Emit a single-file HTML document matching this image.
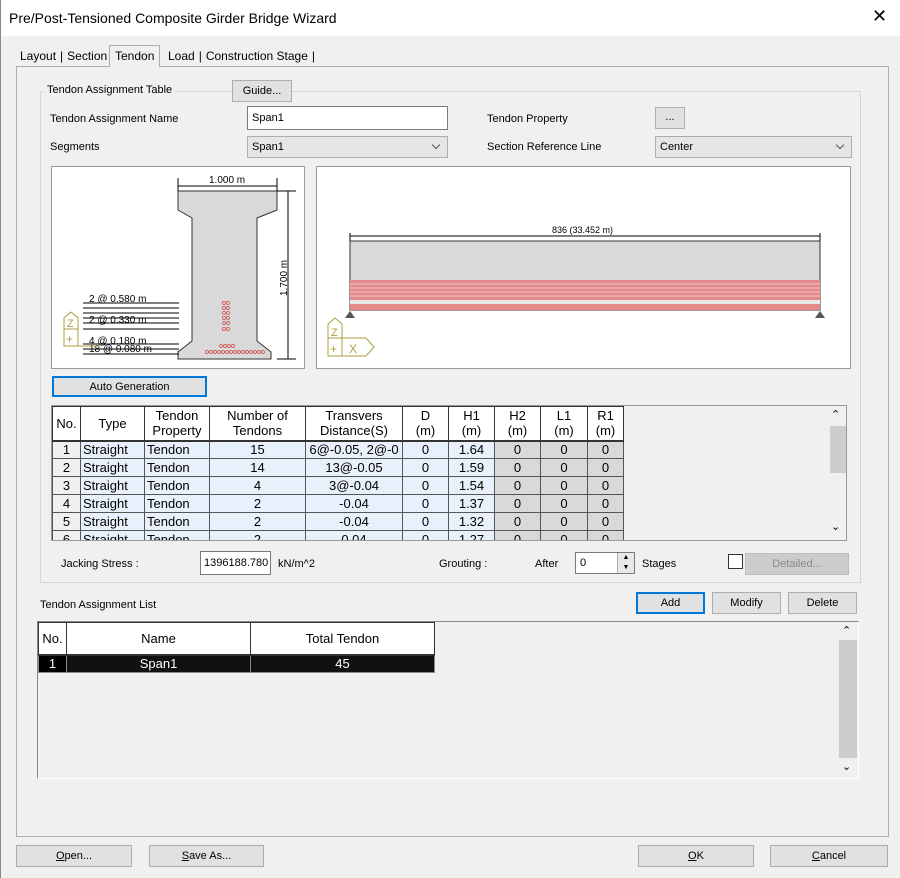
<!DOCTYPE html>
<html><head><style>
*{box-sizing:border-box;margin:0;padding:0}
body{width:900px;height:878px;background:#f0f0f0;font-family:"Liberation Sans",sans-serif;font-size:11px;color:#000;position:relative;overflow:hidden}
.a{position:absolute}
.btn{position:absolute;background:#e1e1e1;border:1px solid #adadad;text-align:center;font-size:11px}
.inp{position:absolute;background:#fff;border:1px solid #7a7a7a;padding-left:4px;font-size:11px}
.cmb{position:absolute;background:#e5e5e5;border:1px solid #adadad;padding-left:4px;font-size:11px}
.cmb:after{content:"";position:absolute;right:8px;top:5px;width:5px;height:5px;border-right:1px solid #555;border-bottom:1px solid #555;transform:rotate(45deg)}
table{border-collapse:collapse;position:absolute;font-size:13px}
td{border:1px solid #555;text-align:center;padding:0;line-height:16px;height:18px;white-space:nowrap;overflow:hidden}
.h td{background:#fff;line-height:15px;border:1px solid #333;border-bottom:2px solid #333}
.n{background:#f0f0f0}
.b{background:#e8f0fb}
.g{background:#d9d9d9}
.l{text-align:left;padding-left:2px}
</style></head><body>
<div class="a" style="left:0;top:0;width:900px;height:36px;background:#fff"></div>
<div class="a" style="left:9px;top:10px;font-size:14px">Pre/Post-Tensioned Composite Girder Bridge Wizard</div>
<div class="a" style="left:872px;top:6px;font-size:18px">✕</div>
<div class="a" style="left:0;top:0;width:1px;height:878px;background:#888"></div>
<div class="a" style="left:16px;top:66px;width:873px;height:771px;border:1px solid #adadad;background:#f0f0f0"></div>
<div class="a" style="left:16px;top:49px;font-size:12px">
<span style="padding:0 4px">Layout</span>|<span style="padding:0 4px">Section</span>|
</div>
<div class="a" style="left:109px;top:45px;width:51px;height:22px;background:#f0f0f0;border:1px solid #adadad;border-bottom:none;font-size:12px;padding:3px 5px">Tendon</div>
<div class="a" style="left:164px;top:49px;font-size:12px"><span style="padding:0 4px">Load</span>|<span style="padding:0 4px">Construction Stage</span>|</div>
<div class="a" style="left:40px;top:91px;width:821px;height:492px;border:1px solid #d5d5d5"></div>
<div class="a" style="left:44px;top:84px;background:#f0f0f0;padding:0 3px;font-size:11px">Tendon Assignment Table</div>
<div class="btn" style="left:232px;top:80px;width:60px;height:22px;line-height:20px">Guide...</div>
<div class="a" style="left:50px;top:113px">Tendon Assignment Name</div>
<div class="inp" style="left:247px;top:106px;width:201px;height:24px;line-height:22px">Span1</div>
<div class="a" style="left:50px;top:141px">Segments</div>
<div class="cmb" style="left:247px;top:136px;width:201px;height:22px;line-height:20px">Span1</div>
<div class="a" style="left:487px;top:113px">Tendon Property</div>
<div class="btn" style="left:655px;top:107px;width:30px;height:22px;line-height:18px">...</div>
<div class="a" style="left:487px;top:141px">Section Reference Line</div>
<div class="cmb" style="left:655px;top:136px;width:197px;height:22px;line-height:20px">Center</div>
<div class="a" style="left:51px;top:166px;width:254px;height:203px;background:#fff;border:1px solid #999"></div>
<svg class="a" style="left:51px;top:166px" width="254" height="203">
<line x1="127" y1="12" x2="127" y2="25" stroke="#000"/><line x1="226" y1="12" x2="226" y2="25" stroke="#000"/>
<line x1="127" y1="20" x2="226" y2="20" stroke="#000"/>
<text x="158" y="17" font-size="10" font-family="Liberation Sans">1.000 m</text>
<path d="M127,25 H226 V44 L206,52 V175 L220,186 V193 H127 V186 L141,175 V52 L127,44 Z" fill="#d9d9d9" stroke="#333"/>
<line x1="226" y1="25" x2="245" y2="25" stroke="#000"/><line x1="226" y1="193" x2="245" y2="193" stroke="#000"/>
<line x1="237" y1="25" x2="237" y2="193" stroke="#000"/>
<text x="236" y="130" font-size="10" font-family="Liberation Sans" transform="rotate(-90 236 130)">1.700 m</text>
<g stroke="#000"><line x1="32" y1="137" x2="128" y2="137"/><line x1="32" y1="142" x2="128" y2="142"/><line x1="32" y1="147" x2="128" y2="147"/><line x1="32" y1="152" x2="128" y2="152"/><line x1="32" y1="157" x2="128" y2="157"/><line x1="32" y1="163" x2="128" y2="163"/>
<line x1="32" y1="178" x2="128" y2="178"/><line x1="32" y1="183" x2="128" y2="183"/><line x1="32" y1="188" x2="128" y2="188"/></g>
<text x="38" y="136" font-size="10" font-family="Liberation Sans">2 @   0.580 m</text>
<text x="38" y="157" font-size="10" font-family="Liberation Sans">2 @   0.330 m</text>
<text x="38" y="178" font-size="10" font-family="Liberation Sans">4 @   0.180 m</text>
<text x="38" y="186" font-size="10" font-family="Liberation Sans">18 @  0.080 m</text>
<g fill="none" stroke="#d04040" stroke-width=".7">
<circle cx="173" cy="137" r="1.5"/><circle cx="177" cy="137" r="1.5"/><circle cx="173" cy="142" r="1.5"/><circle cx="177" cy="142" r="1.5"/><circle cx="173" cy="147" r="1.5"/><circle cx="177" cy="147" r="1.5"/><circle cx="173" cy="152" r="1.5"/><circle cx="177" cy="152" r="1.5"/><circle cx="173" cy="157" r="1.5"/><circle cx="177" cy="157" r="1.5"/><circle cx="173" cy="163" r="1.5"/><circle cx="177" cy="163" r="1.5"/>
<circle cx="170" cy="180" r="1.5"/><circle cx="174" cy="180" r="1.5"/><circle cx="178" cy="180" r="1.5"/><circle cx="182" cy="180" r="1.5"/>
<circle cx="156" cy="186" r="1.5"/><circle cx="160" cy="186" r="1.5"/><circle cx="164" cy="186" r="1.5"/><circle cx="168" cy="186" r="1.5"/><circle cx="172" cy="186" r="1.5"/><circle cx="176" cy="186" r="1.5"/><circle cx="180" cy="186" r="1.5"/><circle cx="184" cy="186" r="1.5"/><circle cx="188" cy="186" r="1.5"/><circle cx="192" cy="186" r="1.5"/><circle cx="196" cy="186" r="1.5"/><circle cx="200" cy="186" r="1.5"/><circle cx="204" cy="186" r="1.5"/><circle cx="208" cy="186" r="1.5"/><circle cx="212" cy="186" r="1.5"/></g>
<g fill="none" stroke="#a8a040"><path d="M13,163 V152 L20,146 L27,152 V163 Z M13,163 H27 V180 H13 Z M27,180 H48"/></g>
<text x="16" y="161" font-size="11" fill="#a8a040">Z</text><text x="15" y="177" font-size="12" fill="#a8a040">+</text>
</svg>
<div class="btn" style="left:52px;top:376px;width:155px;height:21px;line-height:19px;border:2px solid #0078d7;background:#e1e1e1">Auto Generation</div>
<div class="a" style="left:316px;top:166px;width:535px;height:203px;background:#fff;border:1px solid #999"></div>
<svg class="a" style="left:316px;top:166px" width="535" height="203">
<line x1="34" y1="67" x2="34" y2="140" stroke="#000"/><line x1="504" y1="67" x2="504" y2="140" stroke="#000"/>
<line x1="34" y1="70" x2="504" y2="70" stroke="#000"/>
<text x="236" y="67" font-size="9" font-family="Liberation Sans">836 (33.452 m)</text>
<rect x="34" y="75" width="470" height="69" fill="#d9d9d9" stroke="#333"/>
<rect x="34" y="114" width="470" height="20" fill="#e58a8a"/>
<g stroke="#fff" stroke-width=".6"><line x1="34" y1="118" x2="504" y2="118"/><line x1="34" y1="122" x2="504" y2="122"/><line x1="34" y1="126" x2="504" y2="126"/><line x1="34" y1="130" x2="504" y2="130"/></g>
<rect x="34" y="134" width="470" height="4" fill="#e8e8e8"/>
<rect x="34" y="138" width="470" height="6" fill="#e58a8a"/>
<path d="M29,152 L34,145 L39,152 Z M499,152 L504,145 L509,152 Z" fill="#555"/>
<g fill="none" stroke="#a8a040"><path d="M12,172 V158 L19,152 L26,158 V172 Z M12,172 H26 V190 H12 Z M26,172 H50 L58,181 L50,190 H26"/></g>
<text x="15" y="170" font-size="11" fill="#a8a040">Z</text><text x="14" y="187" font-size="12" fill="#a8a040">+</text><text x="33" y="187" font-size="12" fill="#a8a040">X</text>
</svg>
<div class="a" style="left:51px;top:405px;width:796px;height:136px;border:1px solid #999;background:#f0f0f0;overflow:hidden">
<table style="left:0;top:0">
<tr class="h"><td style="width:28px;height:34px">No.</td><td style="width:64px">Type</td><td style="width:65px">Tendon<br>Property</td><td style="width:96px">Number of<br>Tendons</td><td style="width:97px">Transvers<br>Distance(S)</td><td style="width:46px">D<br>(m)</td><td style="width:46px">H1<br>(m)</td><td style="width:46px">H2<br>(m)</td><td style="width:47px">L1<br>(m)</td><td style="width:36px">R1<br>(m)</td></tr>
<tr><td class="n">1</td><td class="b l">Straight</td><td class="b l">Tendon</td><td class="b">15</td><td class="b">6@-0.05, 2@-0</td><td class="b">0</td><td class="b">1.64</td><td class="g">0</td><td class="g">0</td><td class="g">0</td></tr>
<tr><td class="n">2</td><td class="b l">Straight</td><td class="b l">Tendon</td><td class="b">14</td><td class="b">13@-0.05</td><td class="b">0</td><td class="b">1.59</td><td class="g">0</td><td class="g">0</td><td class="g">0</td></tr>
<tr><td class="n">3</td><td class="b l">Straight</td><td class="b l">Tendon</td><td class="b">4</td><td class="b">3@-0.04</td><td class="b">0</td><td class="b">1.54</td><td class="g">0</td><td class="g">0</td><td class="g">0</td></tr>
<tr><td class="n">4</td><td class="b l">Straight</td><td class="b l">Tendon</td><td class="b">2</td><td class="b">-0.04</td><td class="b">0</td><td class="b">1.37</td><td class="g">0</td><td class="g">0</td><td class="g">0</td></tr>
<tr><td class="n">5</td><td class="b l">Straight</td><td class="b l">Tendon</td><td class="b">2</td><td class="b">-0.04</td><td class="b">0</td><td class="b">1.32</td><td class="g">0</td><td class="g">0</td><td class="g">0</td></tr>
<tr><td class="n">6</td><td class="b l">Straight</td><td class="b l">Tendon</td><td class="b">2</td><td class="b">0.04</td><td class="b">0</td><td class="b">1.27</td><td class="g">0</td><td class="g">0</td><td class="g">0</td></tr>
</table>
<div class="a" style="left:776px;top:0;width:19px;height:134px;background:#f0f0f0"></div>
<div class="a" style="left:778px;top:20px;width:16px;height:47px;background:#cdcdcd"></div>
<div class="a" style="left:779px;top:2px;font-size:11px">&#8963;</div>
<div class="a" style="left:779px;top:114px;font-size:11px">&#8964;</div>
</div>
<div class="a" style="left:61px;top:558px">Jacking Stress :</div>
<div class="inp" style="left:200px;top:551px;width:71px;height:24px;line-height:22px;padding-left:3px;overflow:hidden;white-space:nowrap">1396188.780</div>
<div class="a" style="left:278px;top:558px">kN/m^2</div>
<div class="a" style="left:439px;top:558px">Grouting :</div>
<div class="a" style="left:535px;top:558px">After</div>
<div class="inp" style="left:575px;top:552px;width:60px;height:22px;line-height:20px">0</div>
<div class="a" style="left:617px;top:553px;width:17px;height:20px;background:#e8e8e8;border-left:1px solid #aaa;font-size:7px;text-align:center;line-height:10px">▲<br>▼</div>
<div class="a" style="left:642px;top:558px">Stages</div>
<div class="a" style="left:728px;top:554px;width:15px;height:15px;background:#fff;border:1px solid #333"></div>
<div class="btn" style="left:745px;top:553px;width:104px;height:22px;line-height:20px;background:#ccc;border-color:#bfbfbf;color:#8a8a8a">Detailed...</div>
<div class="a" style="left:40px;top:599px">Tendon Assignment List</div>
<div class="btn" style="left:636px;top:592px;width:69px;height:22px;line-height:18px;border:2px solid #0078d7">Add</div>
<div class="btn" style="left:712px;top:592px;width:69px;height:22px;line-height:20px">Modify</div>
<div class="btn" style="left:788px;top:592px;width:69px;height:22px;line-height:20px">Delete</div>
<div class="a" style="left:37px;top:621px;width:822px;height:158px;border:1px solid #888;border-right-color:#fff;border-bottom-color:#fff;background:#f0f0f0;overflow:hidden">
<table style="left:0;top:0">
<tr class="h"><td style="width:28px;height:32px">No.</td><td style="width:184px">Name</td><td style="width:184px">Total Tendon</td></tr>
<tr><td style="background:#000;color:#fff;border-color:#888">1</td><td style="background:#111;color:#fff;border-color:#888">Span1</td><td style="background:#111;color:#fff;border-color:#888">45</td></tr>
</table>
<div class="a" style="left:800px;top:0;width:20px;height:156px;background:#f0f0f0"></div>
<div class="a" style="left:801px;top:18px;width:18px;height:118px;background:#cdcdcd"></div>
<div class="a" style="left:804px;top:2px;font-size:11px">&#8963;</div>
<div class="a" style="left:804px;top:138px;font-size:11px">&#8964;</div>
</div>
<div class="btn" style="left:16px;top:845px;width:116px;height:22px;line-height:20px"><u>O</u>pen...</div>
<div class="btn" style="left:149px;top:845px;width:115px;height:22px;line-height:20px"><u>S</u>ave As...</div>
<div class="btn" style="left:638px;top:845px;width:116px;height:22px;line-height:20px"><u>O</u>K</div>
<div class="btn" style="left:770px;top:845px;width:118px;height:22px;line-height:20px"><u>C</u>ancel</div>
</body></html>
